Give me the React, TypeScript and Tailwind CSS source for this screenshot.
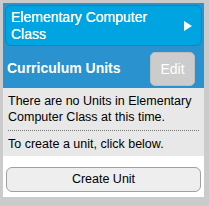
export default function App() {
  return (
    <div className="w-[209px] h-[206px] bg-[#cbcbcb] pt-[3px] pl-[3px] font-['Liberation_Sans',Arial,sans-serif]">
      <div className="w-[201px] bg-[#2a92cf]">
        <div className="px-[2px] pt-[2px]">
          <div className="h-[41px] rounded-[6px] border border-[#1582c0] bg-[#00a4e1] flex items-center pl-[5px] pr-[9px]">
            <div className="flex-1 pr-[26px] text-[14px] leading-[17px] text-white [text-shadow:0_0_0.5px_#fff]">
              Elementary Computer Class
            </div>
            <svg width="8" height="10" viewBox="0 0 8 10">
              <path d="M0 0 L8 5 L0 10 Z" fill="#ffffff" />
            </svg>
          </div>
        </div>
        <div className="h-[42px] flex items-center justify-between pl-[4px] pr-[9px]">
          <span className="mt-[2px] text-[14px] font-bold text-white">Curriculum Units</span>
          <button className="mt-[4px] w-[45px] h-[34px] rounded-[5px] bg-[#cccccc] border border-[#bdbdbd] text-white text-[14px]">
            Edit
          </button>
        </div>
        <div className="bg-[#e8e8e8] px-[5px] pt-[5px] h-[68px] text-[12.5px] leading-[16px] text-black">
          <p>There are no Units in Elementary Computer Class at this time.</p>
          <div className="mt-[5px] border-t border-dotted border-[#777777]" />
          <p className="mt-[5px]">To create a unit, click below.</p>
        </div>
        <div className="bg-white px-[3px] pt-[10px] pb-[5px]">
          <button className="w-full h-[25px] rounded-[6px] border border-[#a0a0a0] bg-[#eeeeee] text-[12.5px] text-black">
            Create Unit
          </button>
        </div>
      </div>
    </div>
  );
}
